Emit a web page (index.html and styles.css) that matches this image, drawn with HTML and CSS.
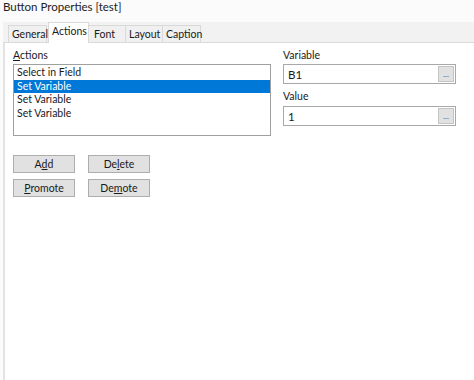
FILE: index.html
```html
<!DOCTYPE html>
<html lang="en">
<head>
    <meta charset="UTF-8">
    <title>Button Properties [test]</title>
    <link rel="stylesheet" href="styles.css">
</head>
<body>
    <div class="title">Button Properties [test]</div>

    <div class="tabs">
        <div class="tab tab-general">General</div>
        <div class="tab tab-actions active">Actions</div>
        <div class="tab tab-font">Font</div>
        <div class="tab tab-layout">Layout</div>
        <div class="tab tab-caption">Caption</div>
    </div>

    <div class="panel">
        <div class="columns">
            <div class="left">
                <div class="label"><u>A</u>ctions</div>
                <div class="listbox">
                    <div class="item">Select in Field</div>
                    <div class="item selected">Set Variable</div>
                    <div class="item">Set Variable</div>
                    <div class="item">Set Variable</div>
                </div>
            </div>

            <div class="right">
                <div class="label">Variable</div>
                <div class="field">
                    <span class="value">B1</span>
                    <span class="dots">...</span>
                </div>
                <div class="label label-value">Value</div>
                <div class="field">
                    <span class="value">1</span>
                    <span class="dots">...</span>
                </div>
            </div>
        </div>

        <div class="buttons">
            <div class="btn">A<u>d</u>d</div>
            <div class="btn">De<u>l</u>ete</div>
            <div class="btn"><u>P</u>romote</div>
            <div class="btn">De<u>m</u>ote</div>
        </div>
    </div>
</body>
</html>
```

FILE: styles.css
```css
/* General Styles */
body {
    margin: 0;
    width: 474px;
    height: 380px;
    overflow: hidden;
    background-color: #fbfbfb;
    font-family: 'Lato', 'Open Sans', sans-serif;
    font-size: 10.5px;
    color: #1a1a1a;
    display: flex;
    flex-direction: column;
}

.title {
    height: 22px;
    padding-left: 3px;
    font-size: 11.5px;
    line-height: 14px;
    color: #222;
}

/* Tabs */
.tabs {
    display: flex;
    align-items: flex-end;
    height: 20px;
    margin-left: 3px;
    padding-left: 5px;
    background-color: #f2f2f2;
    border-bottom: 1px solid #d9d9d9;
}

.tab {
    padding-left: 3px;
    line-height: 16px;
    border: 1px solid #d9d9d9;
    border-bottom: none;
    background-color: #f0f0f0;
    box-sizing: border-box;
    height: 17px;
}

.tab-general { width: 39px; }
.tab-actions { width: 41px; margin-left: 1px; }
.tab-font { width: 37px; border-left: none; padding-left: 5px; }
.tab-layout { width: 37px; border-left: none; }
.tab-caption { width: 38px; border-left: none; }

.tab.active {
    height: 21px;
    margin-bottom: -1px;
    line-height: 17px;
    background-color: #fff;
    border-color: #d9d9d9;
}

/* Panel */
.panel {
    flex: 1;
    margin-left: 3px;
    padding: 6px 0 0 8px;
    background-color: #fff;
    border-left: 2px solid #e3e3e3;
}

.columns {
    display: flex;
}

.left {
    width: 258px;
}

.right {
    width: 173px;
    margin-left: 12px;
}

.label {
    height: 15px;
    line-height: 13px;
}

.label-value {
    margin-top: 6px;
    height: 16px;
    line-height: 12px;
}

.listbox {
    height: 69px;
    border: 1px solid #a0a0a0;
    background-color: #fff;
    padding-top: 1px;
}

.item {
    height: 13.5px;
    line-height: 13px;
    padding-left: 3px;
}

.item.selected {
    background-color: #0078d7;
    color: #fff;
}

.field {
    display: flex;
    align-items: center;
    justify-content: space-between;
    height: 20px;
    border: 1px solid #a8a8a8;
    box-sizing: border-box;
    padding: 0 1px 0 4px;
    font-size: 11.5px;
}

.dots {
    width: 14px;
    height: 14px;
    border: 1px solid #c4c4c4;
    background-color: #e1e1e1;
    color: #555;
    font-size: 8px;
    line-height: 14px;
    text-align: center;
}

/* Buttons */
.buttons {
    display: grid;
    grid-template-columns: 62px 62px;
    column-gap: 13px;
    row-gap: 6px;
    margin-top: 19px;
}

.btn {
    height: 18px;
    line-height: 16px;
    text-align: center;
    border: 1px solid #adadad;
    background-color: #e1e1e1;
    box-sizing: border-box;
}
```
